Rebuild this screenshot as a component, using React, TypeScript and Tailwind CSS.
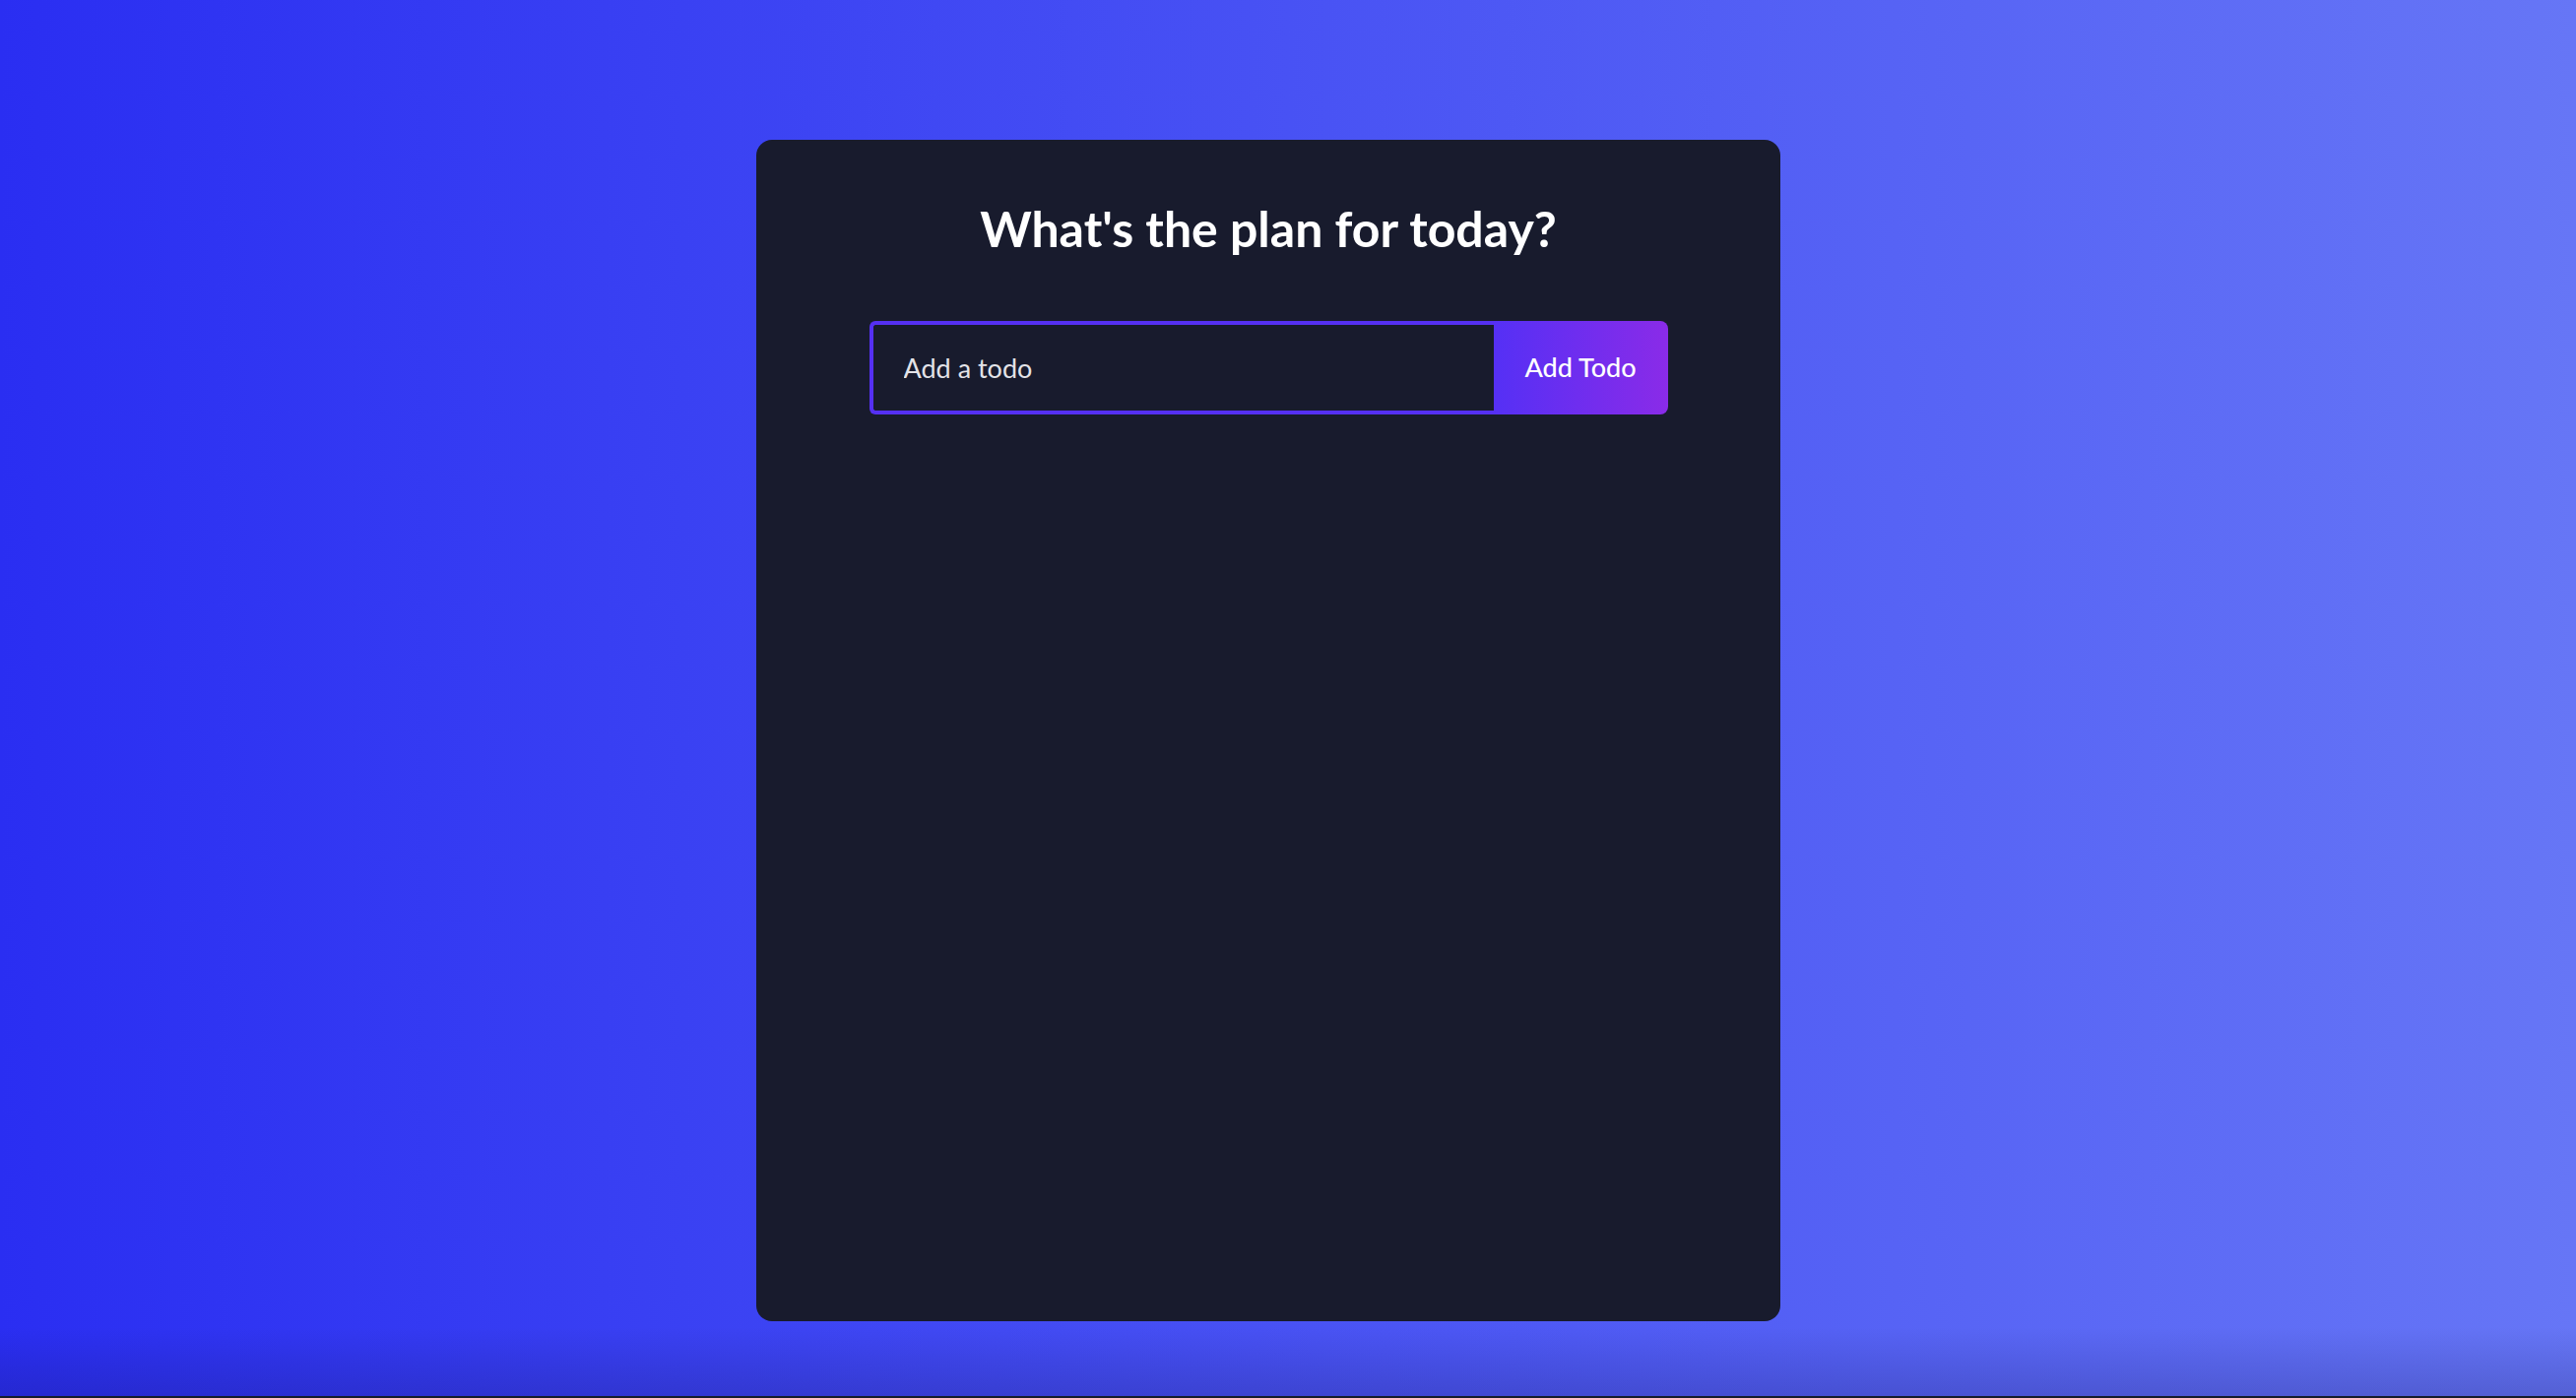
import { useState } from "react";

export default function App() {
  const [todo, setTodo] = useState("");

  return (
    <div className="flex flex-col w-full min-h-[1420px] font-['Lato','Open_Sans',sans-serif]">
      {/* page background */}
      <div className="flex justify-center h-[1418px] pt-[142px] pr-[40px] bg-[linear-gradient(to_top,rgba(20,20,90,0.22),rgba(20,20,90,0)_70px),linear-gradient(90deg,#2a2ef2_0%,#6676f6_100%)]">
        <div className="flex flex-col items-center w-[1040px] h-[1200px] rounded-[16px] bg-[#181b2d]">
          <h1 className="mt-[60px] text-[50px] leading-[60px] font-bold text-white">
            What's the plan for today?
          </h1>

          <form
            className="flex mt-[64px]"
            onSubmit={(e) => {
              e.preventDefault();
              setTodo("");
            }}
          >
            <input
              type="text"
              value={todo}
              onChange={(e) => setTodo(e.target.value)}
              placeholder="Add a todo"
              className="w-[634px] h-[95px] px-[31px] rounded-l-[6px] border-4 border-r-0 border-[#5530f2] bg-transparent text-[27px] text-white placeholder:text-[#e3e3e8] outline-none"
            />
            <button
              type="submit"
              className="w-[177px] h-[95px] rounded-r-[8px] bg-[linear-gradient(90deg,#5530f5_0%,#8a2be8_100%)] text-[27px] font-medium text-white"
            >
              Add Todo
            </button>
          </form>
        </div>
      </div>
      <div className="h-[2px] bg-[#161c2c]" />
    </div>
  );
}
